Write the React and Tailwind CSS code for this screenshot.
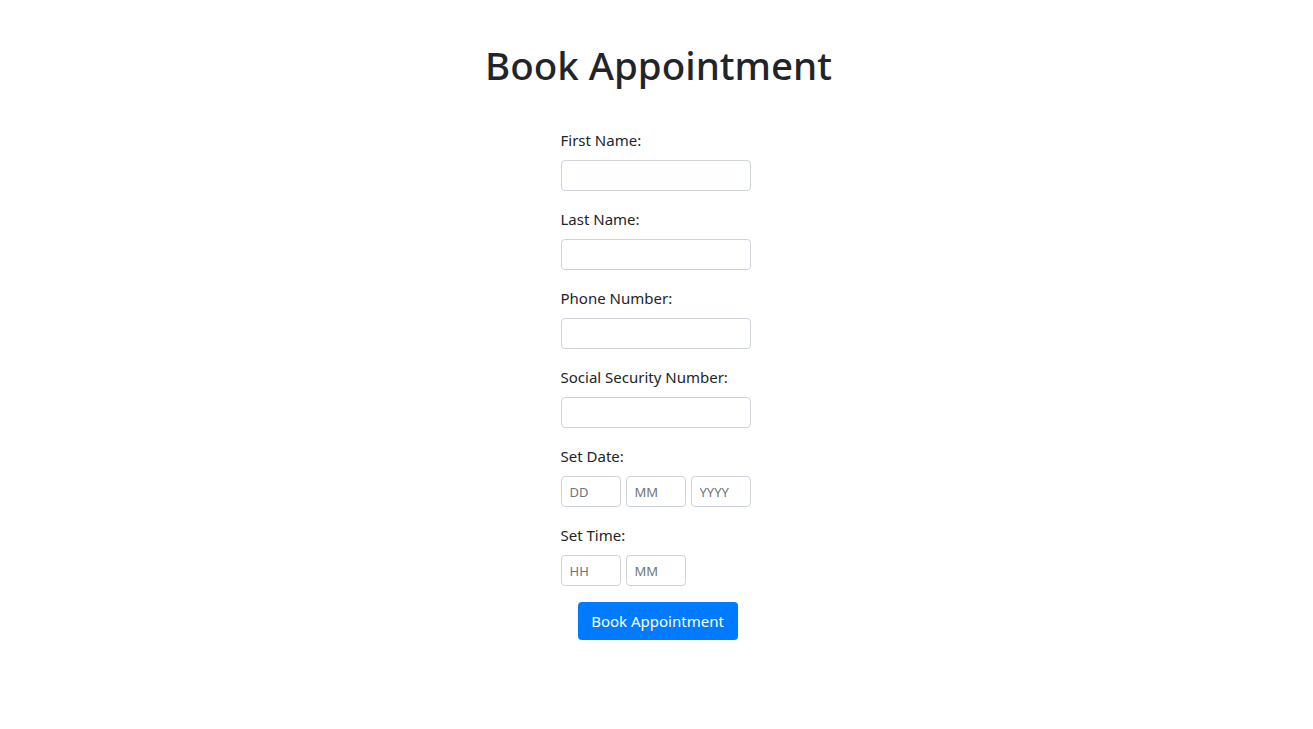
import React, { useState } from "react";

const font = { fontFamily: '"Noto Sans", "Open Sans", sans-serif' };

function Field({ label, value, onChange }) {
  return (
    <div className="mb-4">
      <label className="block mb-2 text-[15px] leading-6 text-[#212529]">{label}</label>
      <input
        type="text"
        value={value}
        onChange={onChange}
        className="block w-[190px] h-[31px] px-2 text-sm text-[#495057] border border-[#ced4da] rounded bg-white outline-none focus:border-[#80bdff]"
      />
    </div>
  );
}

function SmallInput({ placeholder, value, onChange }) {
  return (
    <input
      type="text"
      placeholder={placeholder}
      value={value}
      onChange={onChange}
      className="block w-[60px] h-[31px] px-2 text-[13px] text-[#495057] placeholder:text-[#6c757d] border border-[#ced4da] rounded bg-white outline-none focus:border-[#80bdff]"
    />
  );
}

export default function App() {
  const [form, setForm] = useState({
    first_name: "",
    last_name: "",
    phone: "",
    ssn: "",
    day: "",
    month: "",
    year: "",
    hour: "",
    minute: ""
  });

  const set = (key) => (e) => setForm({ ...form, [key]: e.target.value });

  return (
    <div className="min-h-screen bg-white text-[#212529]" style={font}>
      <h1 className="pt-[41px] text-center text-[38.5px] font-medium leading-[48px] pl-[4px]">Book Appointment</h1>

      <div className="flex justify-center pt-[39px] pr-[2px]">
        <form className="w-[190px]" onSubmit={(e) => e.preventDefault()}>
          <Field label="First Name:" value={form.first_name} onChange={set("first_name")} />
          <Field label="Last Name:" value={form.last_name} onChange={set("last_name")} />
          <Field label="Phone Number:" value={form.phone} onChange={set("phone")} />
          <Field label="Social Security Number:" value={form.ssn} onChange={set("ssn")} />

          <div className="mb-4">
            <label className="block mb-2 text-[15px] leading-6">Set Date:</label>
            <div className="flex gap-[5px]">
              <SmallInput placeholder="DD" value={form.day} onChange={set("day")} />
              <SmallInput placeholder="MM" value={form.month} onChange={set("month")} />
              <SmallInput placeholder="YYYY" value={form.year} onChange={set("year")} />
            </div>
          </div>

          <div className="mb-4">
            <label className="block mb-2 text-[15px] leading-6">Set Time:</label>
            <div className="flex gap-[5px]">
              <SmallInput placeholder="HH" value={form.hour} onChange={set("hour")} />
              <SmallInput placeholder="MM" value={form.minute} onChange={set("minute")} />
            </div>
          </div>

          <div className="flex justify-center pl-[4px]">
            <button
              type="submit"
              className="w-[160px] h-[38px] rounded bg-[#007bff] hover:bg-[#0069d9] text-white text-[15px]"
            >
              Book Appointment
            </button>
          </div>
        </form>
      </div>
    </div>
  );
}
